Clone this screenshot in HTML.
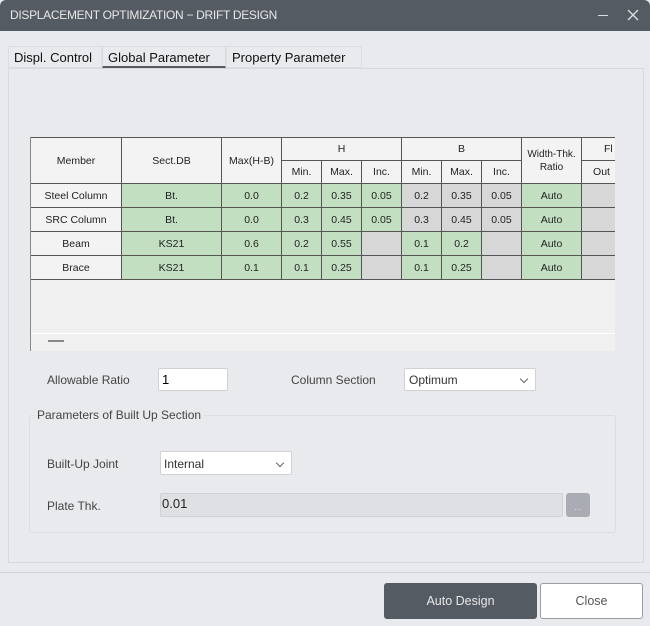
<!DOCTYPE html>
<html><head><meta charset="utf-8"><style>
*{box-sizing:border-box;margin:0;padding:0}
body{width:650px;height:626px;background:#e9eaee;font-family:"Liberation Sans",sans-serif;position:relative;overflow:hidden;color:#333}
.a{position:absolute}
.title{left:0;top:0;width:650px;height:31px;background:#555b63;border-radius:6px 6px 0 0;color:#e8e8e8;font-size:12px;line-height:31px;padding-left:10px;letter-spacing:-0.3px}
.tab{top:46px;height:22px;font-size:13px;line-height:22px;color:#111;border:1px solid #dcdde0;background:#e9eaee;padding:0 5px}
.panel{left:8px;top:68px;width:636px;height:495px;border:1px solid #d8d9dc}
.grid{left:30px;top:137px;width:585px;height:214px;background:#f0f0f0;border-left:1px solid #888;overflow:hidden}
table{border-collapse:collapse;table-layout:fixed;font-size:10.5px;color:#222}
td{border:1px solid #555;text-align:center;height:24px;padding:0}
td.h{background:#f3f3f3;height:23px}
td.g{background:#c3dfc1}
td.x{background:#d7d7d7}
td.m{background:#f3f3f3}
.lbl{font-size:12px;color:#444}
.box{background:#fff;border:1px solid #cfd1d5;border-radius:2px;font-size:12px}
.chev{position:absolute;right:8px;top:7px;width:6px;height:6px;border-right:1.3px solid #666;border-bottom:1.3px solid #666;transform:rotate(45deg)}
</style></head><body>
<div class="a title">DISPLACEMENT OPTIMIZATION − DRIFT DESIGN</div>
<div class="a" style="left:598px;top:15px;width:10px;height:1.3px;background:#ddd"></div>
<svg class="a" style="left:627px;top:9px" width="12" height="12"><path d="M1 1L11 11M11 1L1 11" stroke="#ddd" stroke-width="1.4"/></svg>

<div class="a panel"></div>
<div class="a tab" style="left:8px;width:94px">Displ. Control</div>
<div class="a tab" style="left:102px;width:124px;border-bottom:2px solid #555b63">Global Parameter</div>
<div class="a tab" style="left:226px;width:136px">Property Parameter</div>

<div class="a grid">
<table style="width:640px;margin-left:-1px">
<colgroup><col style="width:91px"><col style="width:100px"><col style="width:60px"><col style="width:40px"><col style="width:40px"><col style="width:40px"><col style="width:40px"><col style="width:40px"><col style="width:40px"><col style="width:60px"><col style="width:40px"><col style="width:49px"></colgroup>
<tr><td class="h" rowspan="2">Member</td><td class="h" rowspan="2">Sect.DB</td><td class="h" rowspan="2">Max(H-B)</td><td class="h" colspan="3">H</td><td class="h" colspan="3">B</td><td class="h" rowspan="2" style="font-size:10px;line-height:13px">Width-Thk.<br>Ratio</td><td class="h" colspan="2" style="text-align:left;padding-left:22px">Fl</td></tr>
<tr><td class="h">Min.</td><td class="h">Max.</td><td class="h">Inc.</td><td class="h">Min.</td><td class="h">Max.</td><td class="h">Inc.</td><td class="h">Out</td><td class="h"></td></tr>
<tr><td class="m">Steel Column</td><td class="g">Bt.</td><td class="g">0.0</td><td class="g">0.2</td><td class="g">0.35</td><td class="g">0.05</td><td class="x">0.2</td><td class="x">0.35</td><td class="x">0.05</td><td class="g">Auto</td><td class="x"></td><td class="x"></td></tr>
<tr><td class="m">SRC Column</td><td class="g">Bt.</td><td class="g">0.0</td><td class="g">0.3</td><td class="g">0.45</td><td class="g">0.05</td><td class="x">0.3</td><td class="x">0.45</td><td class="x">0.05</td><td class="g">Auto</td><td class="x"></td><td class="x"></td></tr>
<tr><td class="m">Beam</td><td class="g">KS21</td><td class="g">0.6</td><td class="g">0.2</td><td class="g">0.55</td><td class="x"></td><td class="g">0.1</td><td class="g">0.2</td><td class="x"></td><td class="g">Auto</td><td class="x"></td><td class="x"></td></tr>
<tr><td class="m">Brace</td><td class="g">KS21</td><td class="g">0.1</td><td class="g">0.1</td><td class="g">0.25</td><td class="x"></td><td class="g">0.1</td><td class="g">0.25</td><td class="x"></td><td class="g">Auto</td><td class="x"></td><td class="x"></td></tr>
</table>
<div class="a" style="left:0;top:196px;width:585px;height:1px;background:#fff"></div>
<div class="a" style="left:17px;top:203px;width:16px;height:2px;background:#888"></div>
</div>

<div class="a lbl" style="left:47px;top:373px">Allowable Ratio</div>
<div class="a box" style="left:158px;top:368px;width:70px;height:23px;padding:3px 0 0 3px;color:#000;font-size:13px">1</div>
<div class="a lbl" style="left:291px;top:373px">Column Section</div>
<div class="a box" style="left:404px;top:368px;width:132px;height:23px;padding:4px 0 0 4px">Optimum<span class="chev"></span></div>

<div class="a" style="left:29px;top:415px;width:587px;height:118px;border:1px solid #dcdde0;border-radius:3px"></div>
<div class="a lbl" style="left:34px;top:408px;background:#e9eaee;padding:0 3px">Parameters of Built Up Section</div>
<div class="a lbl" style="left:47px;top:457px">Built-Up Joint</div>
<div class="a box" style="left:160px;top:451px;width:132px;height:24px;padding:5px 0 0 3px">Internal<span class="chev" style="top:8px"></span></div>
<div class="a lbl" style="left:47px;top:499px">Plate Thk.</div>
<div class="a" style="left:160px;top:493px;width:403px;height:24px;background:#dfe0e4;border:1px solid #cfd1d5;border-radius:2px;font-size:13px;padding:2px 0 0 1px;color:#222">0.01</div>
<div class="a" style="left:566px;top:493px;width:24px;height:24px;background:#a9acb2;border-radius:3px;color:#ddd;font-size:9px;text-align:center;line-height:28px">...</div>

<div class="a" style="left:0;top:572px;width:650px;height:1px;background:#cfd1d5"></div>
<div class="a" style="left:384px;top:583px;width:153px;height:36px;background:#555b63;border-radius:3px;color:#e8e8e8;font-size:12.5px;text-align:center;line-height:36px">Auto Design</div>
<div class="a" style="left:540px;top:583px;width:103px;height:36px;background:#fff;border:1px solid #9a9da3;border-radius:3px;color:#555;font-size:12.5px;text-align:center;line-height:34px">Close</div>
</body></html>
